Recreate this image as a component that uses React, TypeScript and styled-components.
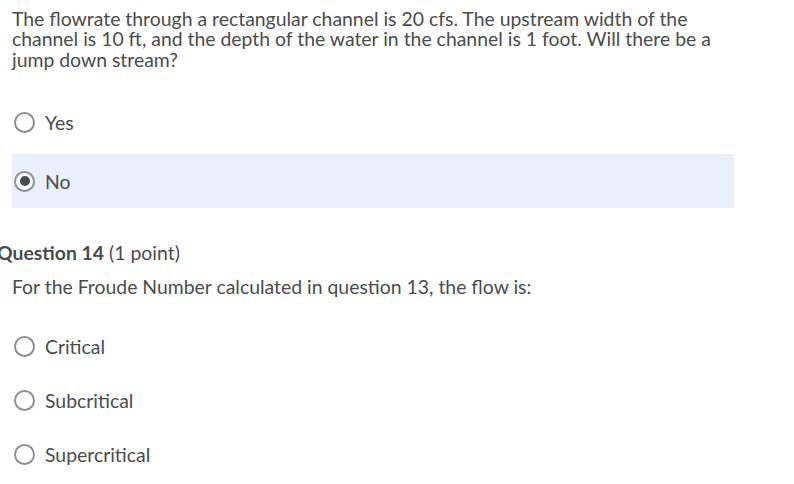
import React from "react";
import styled, { createGlobalStyle } from "styled-components";

const Global = createGlobalStyle`
  html, body { margin: 0; padding: 0; background: #ffffff; }
  body { font-family: Lato, "Open Sans", sans-serif; color: #494c4e; overflow: hidden; }
`;

const Page = styled.div`
  width: 794px;
  height: 484px;
  overflow: hidden;
  display: flex;
  flex-direction: column;
`;

const Prompt = styled.p`
  margin: 8.5px 0 25px 12px;
  width: 722px;
  font-size: 19.4px;
  line-height: 20.5px;
`;

const Options = styled.div<{ $gap: number }>`
  display: flex;
  flex-direction: column;
  gap: ${(p) => p.$gap}px;
  margin-left: 12px;
  width: 722px;
`;

const Option = styled.label<{ $selected?: boolean }>`
  display: flex;
  align-items: center;
  gap: 10px;
  height: 54px;
  padding-left: 2px;
  font-size: 19.4px;
  background: ${(p) => (p.$selected ? "#e8f0fb" : "transparent")};
`;

const Radio = styled.span<{ $checked?: boolean }>`
  width: 21px;
  height: 21px;
  box-sizing: border-box;
  border-radius: 50%;
  border: 2px solid #8b9094;
  background: #ffffff;
  display: flex;
  align-items: center;
  justify-content: center;
  &::after {
    content: "";
    display: ${(p) => (p.$checked ? "block" : "none")};
    width: 10px;
    height: 10px;
    border-radius: 50%;
    background: #494c4e;
  }
`;

const Heading = styled.h2`
  margin: 35px 0 13.5px -3px;
  font-size: 19.4px;
  line-height: 20.5px;
  font-weight: 400;
`;

const Strong = styled.strong`
  font-weight: 700;
`;

const Q14 = styled.p`
  margin: 0 0 22.3px 12px;
  font-size: 19.4px;
  line-height: 20.5px;
`;

export default function App() {
  return (
    <Page>
      <Global />
      <Prompt>
        The flowrate through a rectangular channel is 20 cfs. The upstream width of the
        channel is 10 ft, and the depth of the water in the channel is 1 foot. Will there be a
        jump down stream?
      </Prompt>
      <Options $gap={5}>
        <Option>
          <Radio />
          Yes
        </Option>
        <Option $selected>
          <Radio $checked />
          No
        </Option>
      </Options>
      <Heading>
        <Strong>Question 14</Strong> (1 point)
      </Heading>
      <Q14>For the Froude Number calculated in question 13, the flow is:</Q14>
      <Options $gap={0}>
        <Option>
          <Radio />
          Critical
        </Option>
        <Option>
          <Radio />
          Subcritical
        </Option>
        <Option>
          <Radio />
          Supercritical
        </Option>
      </Options>
    </Page>
  );
}
